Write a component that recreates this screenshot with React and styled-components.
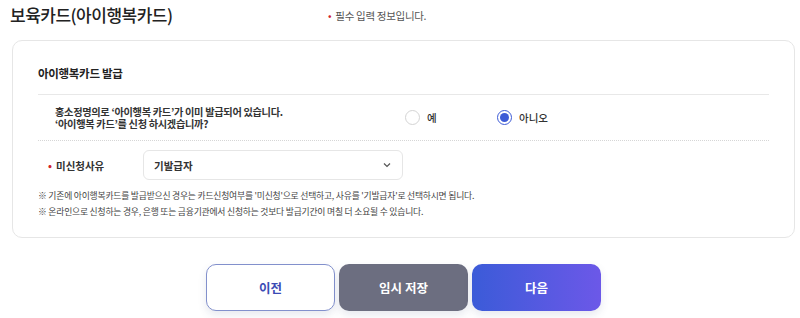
import React from "react";
import styled, { createGlobalStyle } from "styled-components";

const GlobalStyle = createGlobalStyle`
  body {
    margin: 0;
    background: #fff;
    font-family: "Noto Sans CJK KR", "Noto Sans", sans-serif;
    color: #222;
  }
`;

const Page = styled.div`
  width: 800px;
  height: 318px;
  overflow: hidden;
`;

const Header = styled.div`
  display: flex;
  align-items: center;
  height: 30px;
  padding-left: 10px;
`;

const Title = styled.h2`
  width: 318px;
  margin: 0;
  font-size: 17px;
  line-height: 22px;
  font-weight: 500;
  letter-spacing: -0.5px;
  color: #222;
`;

const Required = styled.span`
  font-size: 10.5px;
  color: #555;
  letter-spacing: -0.3px;
  &::before {
    content: "•";
    color: #d0242b;
    margin-right: 4px;
  }
`;

const Card = styled.div`
  margin: 10px 5px 0 12px;
  height: 198px;
  box-sizing: border-box;
  border: 1px solid #e6e6e6;
  border-radius: 10px;
  padding: 0 25px 0 25px;
`;

const SectionTitle = styled.div`
  height: 54px;
  display: flex;
  align-items: flex-end;
  padding-bottom: 13px;
  box-sizing: border-box;
  font-size: 11.5px;
  font-weight: 700;
  color: #222;
  border-bottom: 1px solid #e8e8e8;
  letter-spacing: -0.3px;
`;

const QuestionRow = styled.div`
  display: grid;
  grid-template-columns: 367px auto;
  align-items: center;
  height: 45px;
  border-bottom: 1px dotted #d6d6d6;
`;

const Question = styled.p`
  margin: 0;
  padding-left: 17px;
  font-size: 10.2px;
  font-weight: 700;
  line-height: 12px;
  color: #333;
  letter-spacing: -0.3px;
`;

const RadioGroup = styled.div`
  display: flex;
`;

const RadioOption = styled.label`
  display: flex;
  align-items: center;
  width: 92px;
  font-size: 10.5px;
  color: #333;
  font-weight: 500;
`;

const RadioCircle = styled.span`
  width: 15px;
  height: 15px;
  border-radius: 50%;
  box-sizing: border-box;
  border: 1px solid ${({ checked }) => (checked ? "#3d5bd6" : "#d4d4d4")};
  margin-right: 7px;
  display: flex;
  align-items: center;
  justify-content: center;
  &::after {
    content: "";
    display: ${({ checked }) => (checked ? "block" : "none")};
    width: 9px;
    height: 9px;
    border-radius: 50%;
    background: #3d5bd6;
  }
`;

const SelectRow = styled.div`
  display: flex;
  align-items: center;
  height: 46px;
  padding-top: 2px;
  box-sizing: border-box;
`;

const FieldLabel = styled.div`
  width: 105px;
  padding-left: 10px;
  box-sizing: border-box;
  font-size: 10.5px;
  font-weight: 700;
  color: #333;
  &::before {
    content: "•";
    color: #d0242b;
    margin-right: 4px;
  }
`;

const SelectBox = styled.div`
  width: 260px;
  height: 30px;
  box-sizing: border-box;
  border: 1px solid #e6e6e6;
  border-radius: 6px;
  display: flex;
  align-items: center;
  justify-content: space-between;
  padding: 0 10px 0 10px;
  font-size: 10.5px;
  font-weight: 700;
  color: #333;
`;

const Notes = styled.div`
  padding-top: 1px;
`;

const Note = styled.p`
  margin: 0;
  font-size: 8.8px;
  line-height: 16px;
  color: #444;
  letter-spacing: -0.2px;
`;

const ButtonRow = styled.div`
  display: flex;
  justify-content: center;
  gap: 4px;
  margin-top: 26px;
  padding-left: 7px;
`;

const Button = styled.button`
  width: 129px;
  height: 47px;
  border-radius: 10px;
  font-family: inherit;
  font-size: 12.5px;
  font-weight: 700;
  box-sizing: border-box;
  box-shadow: 0 4px 8px rgba(60, 70, 120, 0.12);
  border: ${({ variant }) =>
    variant === "outline" ? "1px solid #8290cc" : "none"};
  background: ${({ variant }) =>
    variant === "outline"
      ? "#fff"
      : variant === "gray"
      ? "#6c6e80"
      : "linear-gradient(90deg, #3b5bd8 0%, #6c58e8 100%)"};
  color: ${({ variant }) => (variant === "outline" ? "#3b4bb5" : "#fff")};
`;

const Chevron = () => (
  <svg width="10" height="10" viewBox="0 0 10 10">
    <path d="M2 3.5 L5 6.5 L8 3.5" fill="none" stroke="#555" strokeWidth="1.2" />
  </svg>
);

export default function App() {
  return (
    <Page>
      <GlobalStyle />
      <Header>
        <Title>보육카드(아이행복카드)</Title>
        <Required>필수 입력 정보입니다.</Required>
      </Header>
      <Card>
        <SectionTitle>아이행복카드 발급</SectionTitle>
        <QuestionRow>
          <Question>
            홍소정명의로 ‘아이행복 카드’가 이미 발급되어 있습니다.
            <br />
            ‘아이행복 카드’를 신청 하시겠습니까?
          </Question>
          <RadioGroup>
            <RadioOption>
              <RadioCircle />예
            </RadioOption>
            <RadioOption>
              <RadioCircle checked />아니오
            </RadioOption>
          </RadioGroup>
        </QuestionRow>
        <SelectRow>
          <FieldLabel>미신청사유</FieldLabel>
          <SelectBox>
            기발급자
            <Chevron />
          </SelectBox>
        </SelectRow>
        <Notes>
          <Note>
            ※ 기존에 아이행복카드를 발급받으신 경우는 카드신청여부를 '미신청'으로 선택하고, 사유를 '기발급자'로 선택하시면 됩니다.
          </Note>
          <Note>
            ※ 온라인으로 신청하는 경우, 은행 또는 금융기관에서 신청하는 것보다 발급기간이 며칠 더 소요될 수 있습니다.
          </Note>
        </Notes>
      </Card>
      <ButtonRow>
        <Button variant="outline">이전</Button>
        <Button variant="gray">임시 저장</Button>
        <Button variant="primary">다음</Button>
      </ButtonRow>
    </Page>
  );
}
